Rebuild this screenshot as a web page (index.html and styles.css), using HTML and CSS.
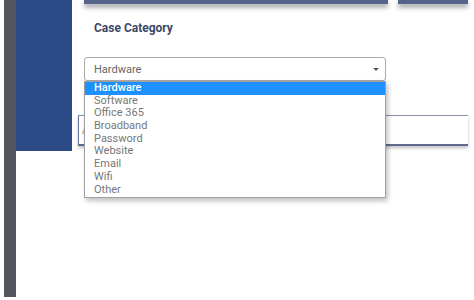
FILE: index.html
```html
<!DOCTYPE html>
<html>
<head>
<meta charset="utf-8">
<link rel="stylesheet" href="styles.css">
</head>
<body>
<div class="page">
  <div class="rail"></div>
  <div class="sidebar"></div>
  <div class="main">
    <div class="cards">
      <div class="card card-wide"></div>
      <div class="card card-small"></div>
    </div>
    <h2 class="heading">Case Category</h2>
    <div class="field">
      <div class="select">
        <span class="select-value">Hardware</span>
        <span class="caret"></span>
      </div>
      <ul class="dropdown">
        <li class="opt selected">Hardware</li>
        <li class="opt">Software</li>
        <li class="opt">Office 365</li>
        <li class="opt">Broadband</li>
        <li class="opt">Password</li>
        <li class="opt">Website</li>
        <li class="opt">Email</li>
        <li class="opt">Wifi</li>
        <li class="opt">Other</li>
      </ul>
    </div>
    <div class="input-box"><span class="input-text">A</span></div>
  </div>
</div>
</body>
</html>
```
FILE: styles.css
```css
html, body {
  margin: 0;
  padding: 0;
  background: #ffffff;
  width: 474px;
  height: 300px;
  overflow: hidden;
  font-family: Roboto, "Liberation Sans", sans-serif;
}
.page {
  display: flex;
  align-items: flex-start;
  height: 300px;
}
.rail {
  margin-left: 4px;
  width: 12px;
  height: 297px;
  background: #52565d;
  flex: none;
}
.sidebar {
  width: 56px;
  height: 151px;
  background: #2b4a86;
  flex: none;
}
.main {
  flex: 1;
  display: flex;
  flex-direction: column;
}
.cards {
  display: flex;
  gap: 10px;
  padding-left: 12px;
}
.card {
  height: 4px;
  background: #56648c;
  box-shadow: 0 3px 5px rgba(40, 45, 60, 0.55);
}
.card-wide { width: 304px; }
.card-small { width: 70px; }
.heading {
  margin: 17px 0 0 22px;
  font-size: 12px;
  font-weight: 700;
  color: #3d4866;
  line-height: 14px;
}
.field {
  position: relative;
  margin: 22px 0 0 12px;
  width: 302px;
}
.select {
  height: 22px;
  border: 1px solid #a9a9a9;
  border-radius: 3px;
  display: flex;
  align-items: center;
  justify-content: space-between;
  padding: 0 6px 0 9px;
  background: #fff;
}
.select-value {
  font-size: 11px;
  color: #666;
}
.caret {
  width: 0;
  height: 0;
  border-left: 3px solid transparent;
  border-right: 3px solid transparent;
  border-top: 3px solid #555;
}
.dropdown {
  position: absolute;
  left: 0;
  top: 24px;
  width: 300px;
  margin: 0;
  padding: 0 0 1px 0;
  list-style: none;
  background: #fff;
  border: 1px solid #a0a0a0;
  box-shadow: 2px 3px 5px rgba(0, 0, 0, 0.25);
  z-index: 2;
}
.opt {
  height: 12.7px;
  line-height: 12.7px;
  padding-left: 9px;
  font-size: 11px;
  color: #777;
}
.opt.selected {
  background: #1e90ff;
  color: #fff;
  font-weight: 500;
}
.input-box {
  margin: 34px 0 0 6px;
  width: 389px;
  height: 28px;
  border-left: 1px solid #6a7596;
  border-top: 1px solid #8a92ad;
  border-bottom: 2px solid #5f6a8c;
  box-shadow: 0 2px 3px rgba(80, 80, 80, 0.35);
  display: flex;
  align-items: center;
}
.input-text {
  font-size: 10px;
  color: #999;
  padding-left: 3px;
}
```
